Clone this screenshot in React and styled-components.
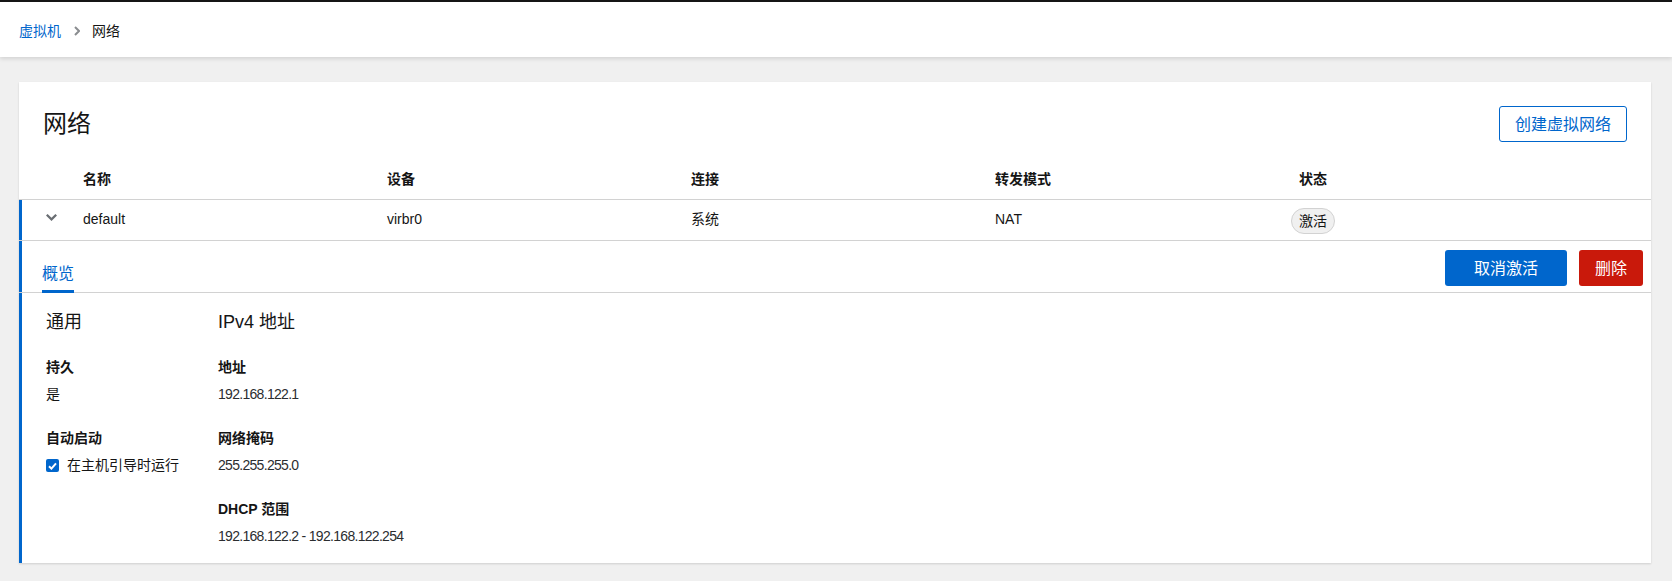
import styled, { createGlobalStyle } from "styled-components";

const GlobalStyle = createGlobalStyle`
  html, body {
    margin: 0;
    padding: 0;
    background: #f0f0f0;
    font-family: "Liberation Sans", "Noto Sans CJK SC", sans-serif;
    font-size: 14px;
    line-height: 21px;
    color: #151515;
  }
  * { box-sizing: border-box; }
`;

const columns = ["名称", "设备", "连接", "转发模式", "状态"];

const Page = styled.div`
  min-height: 581px;
  background: #f0f0f0;
`;

const TopBar = styled.header`
  height: 57px;
  border-top: 2px solid #151515;
  background: #fff;
  box-shadow: 0 2px 4px rgba(3, 3, 3, 0.12);
  display: flex;
  align-items: center;
  padding: 3px 19px 0;
`;

const Crumb = styled.a`
  color: ${(p) => (p.$current ? "#151515" : "#0066cc")};
  text-decoration: none;
  line-height: 21px;
`;

const CrumbSep = styled.span`
  display: inline-flex;
  margin: 0 12px 0 13px;
  color: #8a8d90;
`;

const Card = styled.section`
  margin: 25px 21px 0 19px;
  background: #fff;
  box-shadow: 0 1px 2px rgba(3, 3, 3, 0.14);
`;

const CardHeader = styled.div`
  display: flex;
  justify-content: space-between;
  align-items: center;
  padding: 24px 24px 18px;
`;

const Title = styled.h1`
  margin: 0;
  font-size: 24px;
  font-weight: 400;
  line-height: 36px;
`;

const OutlineButton = styled.button`
  height: 36px;
  padding: 0 15px;
  font: inherit;
  font-size: 16px;
  color: #0066cc;
  background: #fff;
  border: 1px solid #0066cc;
  border-radius: 3px;
`;

const Row = styled.div`
  display: grid;
  grid-template-columns: 64px repeat(5, 1fr);
  padding-right: 48px;
  align-items: center;
  height: ${(p) => p.$h}px;
  line-height: 21px;
  border-bottom: 1px solid #d2d2d2;
  font-weight: ${(p) => (p.$head ? 700 : 400)};
`;

const Cell = styled.span`
  margin-top: -2px;
`;

const Toggle = styled.span`
  display: flex;
  justify-content: center;
  margin-top: -5px;
  color: #6a6e73;
`;

const Badge = styled.span`
  display: inline-block;
  height: 26px;
  line-height: 24px;
  padding: 0 7px;
  margin: 2px 0 0 -8px;
  border: 1px solid #d2d2d2;
  border-radius: 13px;
  background: #f0f0f0;
`;

const Expanded = styled.div`
  box-shadow: inset 3px 0 0 #0066cc;
`;

const TabBar = styled.div`
  display: flex;
  justify-content: space-between;
  align-items: flex-start;
  height: 52px;
  border-bottom: 1px solid #d2d2d2;
  padding: 0 8px 0 23px;
`;

const Tab = styled.span`
  position: relative;
  padding-top: 21px;
  font-size: 16px;
  line-height: 24px;
  color: #0066cc;
  &::after {
    content: "";
    position: absolute;
    left: 0;
    right: 0;
    top: 49px;
    height: 3px;
    background: #0066cc;
  }
`;

const Actions = styled.div`
  display: flex;
  gap: 12px;
  padding-top: 9px;
`;

const SolidButton = styled.button`
  height: 36px;
  padding: 0 ${(p) => p.$pad}px;
  font: inherit;
  font-size: 16px;
  color: #fff;
  background: ${(p) => (p.$danger ? "#c9190b" : "#0066cc")};
  border: none;
  border-radius: 3px;
`;

const Details = styled.div`
  display: grid;
  grid-template-columns: 172px 1fr;
  padding: 16px 0 16px 27px;
`;

const Column = styled.div`
  display: flex;
  flex-direction: column;
`;

const SectionTitle = styled.h2`
  margin: 0 0 21px;
  font-size: 18px;
  font-weight: 400;
  line-height: 27px;
`;

const Group = styled.div`
  display: flex;
  flex-direction: column;
  gap: 6px;
  margin-bottom: ${(p) => (p.$last ? 0 : 23)}px;
`;

const Term = styled.div`
  font-weight: 700;
  line-height: 21px;
`;

const Value = styled.div`
  line-height: 21px;
  color: ${(p) => (p.$mono ? "#2b2d30" : "#151515")};
  letter-spacing: ${(p) => (p.$mono ? "-0.7px" : "0")};
`;

const CheckLabel = styled.label`
  display: flex;
  align-items: center;
  gap: 8px;
  line-height: 21px;
`;

const CheckBox = styled.span`
  display: inline-flex;
  align-items: center;
  justify-content: center;
  width: 13px;
  height: 13px;
  border-radius: 2px;
  background: #0066cc;
`;

const AngleRight = () => (
  <svg width="6" height="10" viewBox="0 0 6 10">
    <path d="M1 1l4 4-4 4" fill="none" stroke="currentColor" strokeWidth="2" />
  </svg>
);

const AngleDown = () => (
  <svg width="11" height="7" viewBox="0 0 11 7">
    <path d="M0 1.6L1.6 0l3.9 3.8L9.4 0 11 1.6 5.5 7z" fill="currentColor" />
  </svg>
);

const Check = () => (
  <svg width="9" height="8" viewBox="0 0 9 8">
    <path d="M1 4.2l2.4 2.4L8 1.3" fill="none" stroke="#fff" strokeWidth="2" />
  </svg>
);

const App = () => {
  return (
    <Page>
      <GlobalStyle />
      <TopBar>
        <Crumb href="#">虚拟机</Crumb>
        <CrumbSep>
          <AngleRight />
        </CrumbSep>
        <Crumb $current>网络</Crumb>
      </TopBar>

      <Card>
        <CardHeader>
          <Title>网络</Title>
          <OutlineButton>创建虚拟网络</OutlineButton>
        </CardHeader>

        <Row $h={40} $head>
          <span />
          {columns.map((c) => (
            <span key={c}>{c}</span>
          ))}
        </Row>

        <Expanded>
          <Row $h={41}>
            <Toggle>
              <AngleDown />
            </Toggle>
            <Cell>default</Cell>
            <Cell>virbr0</Cell>
            <Cell>系统</Cell>
            <Cell>NAT</Cell>
            <span>
              <Badge>激活</Badge>
            </span>
          </Row>

          <TabBar>
            <Tab>概览</Tab>
            <Actions>
              <SolidButton $pad={29}>取消激活</SolidButton>
              <SolidButton $pad={16} $danger>
                删除
              </SolidButton>
            </Actions>
          </TabBar>

          <Details>
            <Column>
              <SectionTitle>通用</SectionTitle>
              <Group>
                <Term>持久</Term>
                <Value>是</Value>
              </Group>
              <Group>
                <Term>自动启动</Term>
                <CheckLabel>
                  <CheckBox>
                    <Check />
                  </CheckBox>
                  在主机引导时运行
                </CheckLabel>
              </Group>
            </Column>
            <Column>
              <SectionTitle>IPv4 地址</SectionTitle>
              <Group>
                <Term>地址</Term>
                <Value $mono>192.168.122.1</Value>
              </Group>
              <Group>
                <Term>网络掩码</Term>
                <Value $mono>255.255.255.0</Value>
              </Group>
              <Group $last>
                <Term>DHCP 范围</Term>
                <Value $mono>192.168.122.2 - 192.168.122.254</Value>
              </Group>
            </Column>
          </Details>
        </Expanded>
      </Card>
    </Page>
  );
};

export default App;
